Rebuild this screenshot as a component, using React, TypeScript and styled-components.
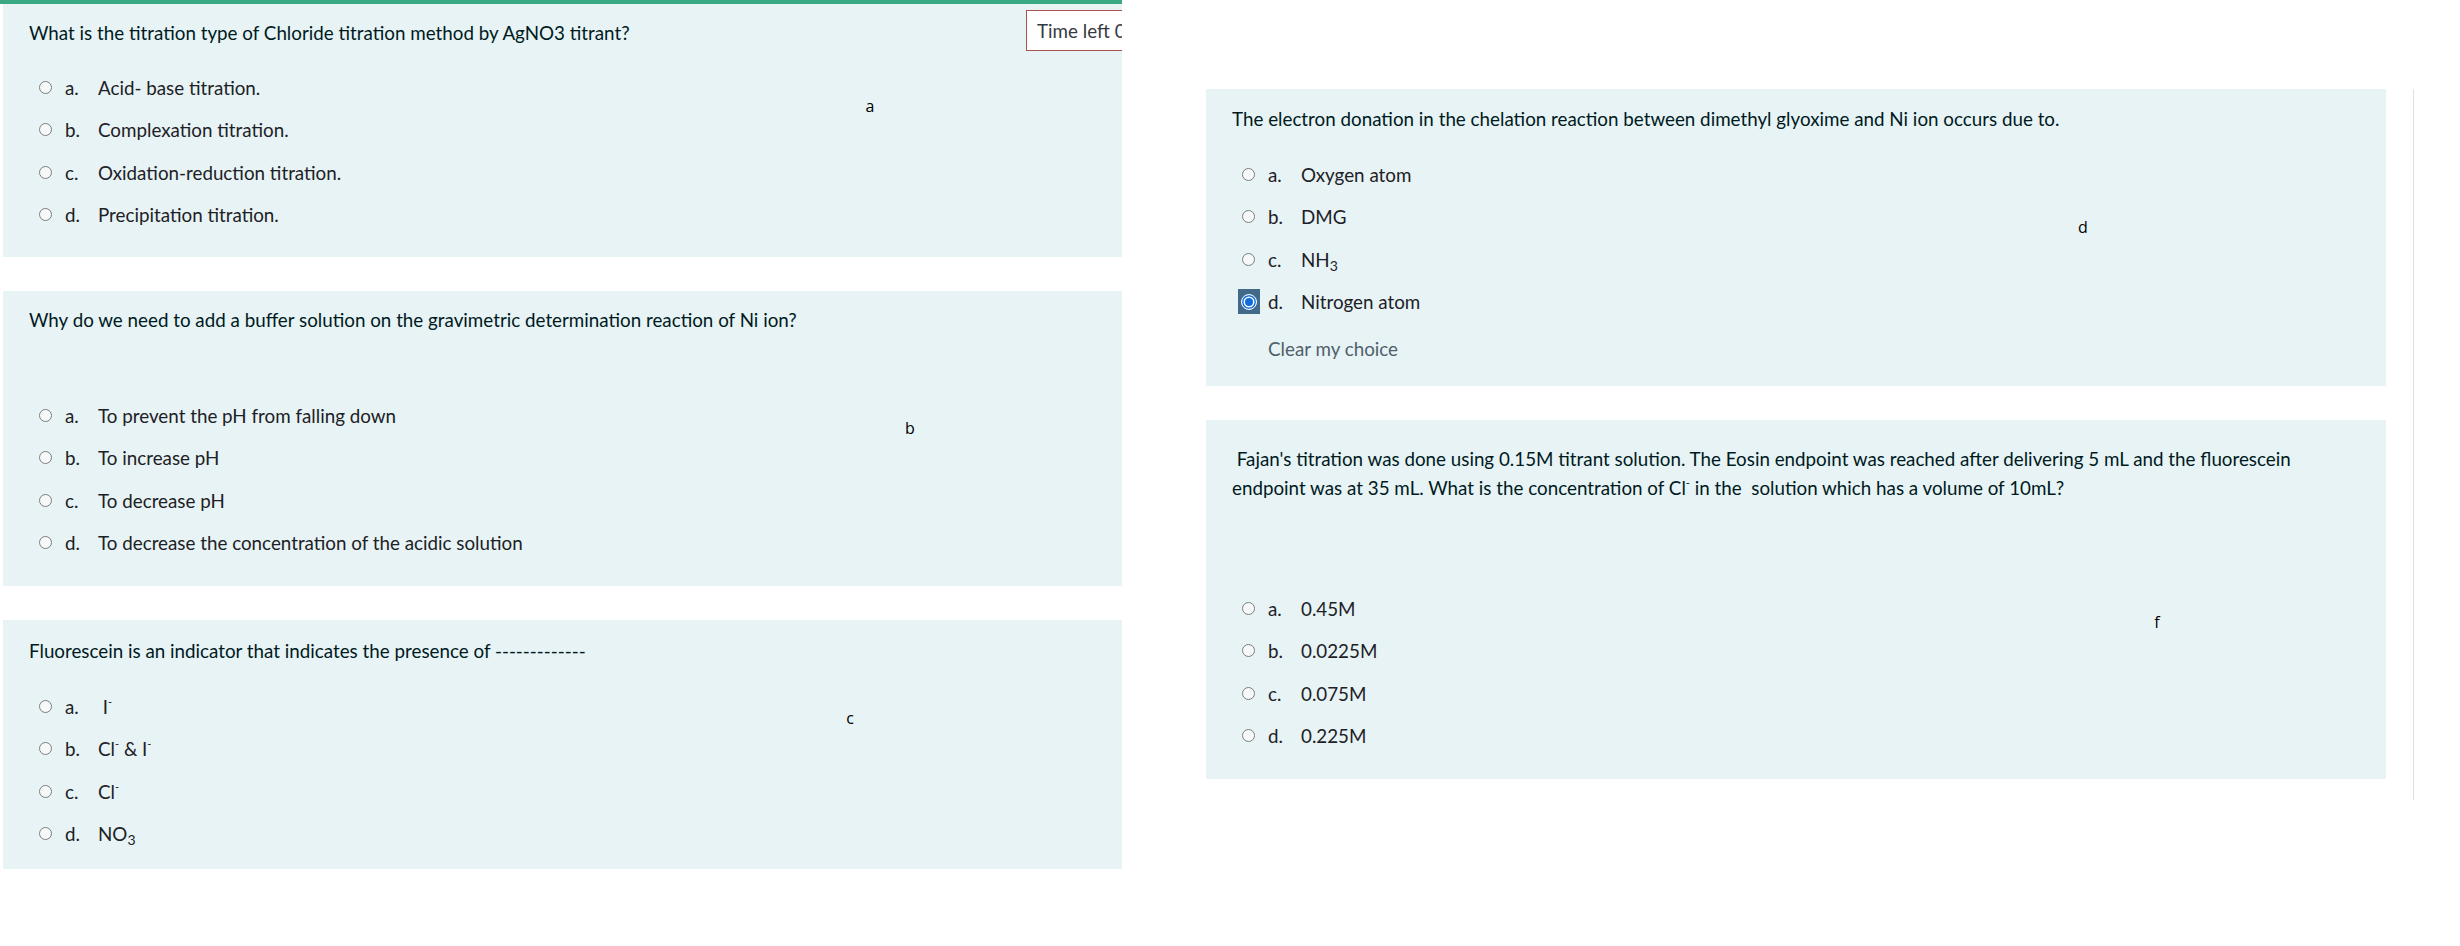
import React from 'react';
import styled, { createGlobalStyle } from 'styled-components';

const GlobalStyle = createGlobalStyle`
    html, body {
        margin: 0;
        padding: 0;
        background: #ffffff;
    }
    body {
        font-family: Lato, "Open Sans", "Liberation Sans", sans-serif;
        color: #001a1e;
    }
`;

const Page = styled.div`
    display: flex;
    align-items: flex-start;
    width: 2460px;
    height: 946px;
    overflow: hidden;
`;

const LeftColumn = styled.div`
    position: relative;
    flex: none;
    width: 1122px;
    overflow: hidden;
    border-top: 4px solid #3aa882;
    display: flex;
    flex-direction: column;
    gap: 34px;
`;

const RightColumn = styled.div`
    flex: none;
    width: 1180px;
    margin-left: 84px;
    padding-top: 89px;
    display: flex;
    flex-direction: column;
    gap: 34px;
`;

const DrawerRule = styled.div`
    flex: none;
    width: 1px;
    height: 711px;
    margin-left: 27px;
    margin-top: 89px;
    background: #dee2e6;
`;

const Panel = styled.div<{ $padTop: number; $padBottom: number; $inset?: boolean }>`
    position: relative;
    box-sizing: border-box;
    flex: none;
    margin-left: ${p => (p.$inset ? '3px' : '0')};
    padding: ${p => p.$padTop}px 25px ${p => p.$padBottom}px 26px;
    background: #e7f3f5;
`;

const QText = styled.div<{ $gap: number }>`
    font-size: 18.8px;
    line-height: 29px;
    color: #001a1e;
    margin-bottom: ${p => p.$gap}px;
`;

const Options = styled.div`
    display: flex;
    flex-direction: column;
    margin-left: 10px;
`;

const OptionRow = styled.div`
    display: flex;
    align-items: center;
    height: 42.5px;
    font-size: 18.8px;
    color: #1d2125;
`;

const RadioSlot = styled.span`
    position: relative;
    flex: none;
    width: 13px;
    height: 13px;
    margin-right: 13px;
    display: flex;
    align-items: center;
    justify-content: center;
`;

const Radio = styled.span`
    box-sizing: border-box;
    width: 13px;
    height: 13px;
    border-radius: 50%;
    border: 1.5px solid #7a7e83;
    background: #f7f8f8;
`;

const FocusBox = styled.span`
    position: absolute;
    left: -4.5px;
    top: -6px;
    width: 22px;
    height: 25px;
    background: #40698a;
    display: flex;
    align-items: center;
    justify-content: center;
`;

const CheckedRadio = styled.span`
    box-sizing: border-box;
    width: 16px;
    height: 16px;
    border-radius: 50%;
    border: 1px solid #ffffff;
    background: #0f6cdf;
    box-shadow: inset 0 0 0 1.5px #0f6cdf, inset 0 0 0 3px #ffffff;
`;

const Num = styled.span`
    flex: none;
    width: 33px;
`;

const Sup = styled.sup`
    font-size: 11px;
    line-height: 0;
    vertical-align: 8px;
`;

const Sub = styled.sub`
    font-size: 14px;
    line-height: 0;
    vertical-align: -4px;
`;

const ClearChoice = styled.div`
    margin: 10.75px 0 0 36px;
    font-size: 18.8px;
    line-height: 29px;
    color: #4f5f69;
`;

const Mark = styled.span<{ $x: number; $y: number }>`
    position: absolute;
    left: ${p => p.$x}px;
    top: ${p => p.$y}px;
    transform: translate(-50%, -50%);
    font-family: "Open Sans", sans-serif;
    font-size: 16px;
    color: #000000;
`;

const Timer = styled.div`
    position: absolute;
    left: 1026px;
    top: 6px;
    box-sizing: border-box;
    width: 96px;
    height: 41px;
    padding-left: 10px;
    display: flex;
    align-items: center;
    background: #ffffff;
    border: 1px solid #a9514b;
    border-right: none;
    font-size: 18.8px;
    color: #343a40;
    white-space: nowrap;
`;

type Option = { body: React.ReactNode; checked?: boolean };

type Question = {
    id: string;
    text: React.ReactNode;
    options: Option[];
    padTop: number;
    gap: number;
    padBottom: number;
    mark: { letter: string; x: number; y: number };
    clear?: boolean;
};

const letters = ['a.', 'b.', 'c.', 'd.'];

const leftQuestions: Question[] = [
    {
        id: 'q1',
        text: 'What is the titration type of Chloride titration method by AgNO3 titrant?',
        options: [
            { body: 'Acid- base titration.' },
            { body: 'Complexation titration.' },
            { body: 'Oxidation-reduction titration.' },
            { body: 'Precipitation titration.' },
        ],
        padTop: 14, gap: 18.75, padBottom: 21.25,
        mark: { letter: 'a', x: 867, y: 102 },
    },
    {
        id: 'q2',
        text: 'Why do we need to add a buffer solution on the gravimetric determination reaction of Ni ion?',
        options: [
            { body: 'To prevent the pH from falling down' },
            { body: 'To increase pH' },
            { body: 'To decrease pH' },
            { body: 'To decrease the concentration of the acidic solution' },
        ],
        padTop: 13.5, gap: 60.25, padBottom: 22.25,
        mark: { letter: 'b', x: 907, y: 137 },
    },
    {
        id: 'q3',
        text: 'Fluorescein is an indicator that indicates the presence of -------------',
        options: [
            { body: <>{'\u00a0I'}<Sup>-</Sup></> },
            { body: <>Cl<Sup>-</Sup>{' & I'}<Sup>-</Sup></> },
            { body: <>Cl<Sup>-</Sup></> },
            { body: <>NO<Sub>3</Sub></> },
        ],
        padTop: 15.5, gap: 20.25, padBottom: 14.25,
        mark: { letter: 'c', x: 847, y: 98 },
    },
];

const rightQuestions: Question[] = [
    {
        id: 'q4',
        text: 'The electron donation in the chelation reaction between dimethyl glyoxime and Ni ion occurs due to.',
        options: [
            { body: 'Oxygen atom' },
            { body: 'DMG' },
            { body: <>NH<Sub>3</Sub></> },
            { body: 'Nitrogen atom', checked: true },
        ],
        padTop: 14.5, gap: 20.25, padBottom: 23.5,
        mark: { letter: 'd', x: 877, y: 138 },
        clear: true,
    },
    {
        id: 'q5',
        text: (
            <>
                {"\u00a0Fajan's titration was done using 0.15M titrant solution. The Eosin endpoint was reached after delivering 5 mL and the fluorescein endpoint was at 35 mL. What is the concentration of Cl"}
                <Sup>-</Sup>
                {' in the \u00a0solution which has a volume of 10mL?'}
            </>
        ),
        options: [
            { body: '0.45M' },
            { body: '0.0225M' },
            { body: '0.075M' },
            { body: '0.225M' },
        ],
        padTop: 23.5, gap: 85.25, padBottom: 22.25,
        mark: { letter: 'f', x: 951, y: 202 },
    },
];

const QuestionCard = ({ q, inset }: { q: Question; inset?: boolean }) => (
    <Panel $padTop={q.padTop} $padBottom={q.padBottom} $inset={inset}>
        <QText $gap={q.gap}>{q.text}</QText>
        <Options>
            {q.options.map((opt, index) => (
                <OptionRow key={index}>
                    <RadioSlot>
                        {opt.checked ? (
                            <FocusBox>
                                <CheckedRadio />
                            </FocusBox>
                        ) : (
                            <Radio />
                        )}
                    </RadioSlot>
                    <Num>{letters[index]}</Num>
                    <span>{opt.body}</span>
                </OptionRow>
            ))}
        </Options>
        {q.clear && <ClearChoice>Clear my choice</ClearChoice>}
        <Mark $x={q.mark.x} $y={q.mark.y}>{q.mark.letter}</Mark>
    </Panel>
);

const App = () => {
    return (
        <>
            <GlobalStyle />
            <Page>
                <LeftColumn>
                    {leftQuestions.map(q => (
                        <QuestionCard key={q.id} q={q} inset />
                    ))}
                    <Timer>Time left 0</Timer>
                </LeftColumn>
                <RightColumn>
                    {rightQuestions.map(q => (
                        <QuestionCard key={q.id} q={q} />
                    ))}
                </RightColumn>
                <DrawerRule />
            </Page>
        </>
    );
};

export default App;
